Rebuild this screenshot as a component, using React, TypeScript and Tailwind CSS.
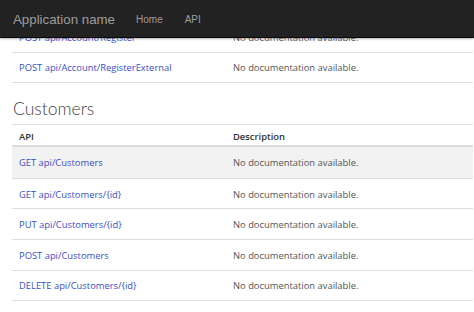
const accountRows = [
  { api: "POST api/Account/Register", desc: "No documentation available." },
  { api: "POST api/Account/RegisterExternal", desc: "No documentation available." },
];

const customerRows = [
  { api: "GET api/Customers", desc: "No documentation available.", active: true },
  { api: "GET api/Customers/{id}", desc: "No documentation available." },
  { api: "PUT api/Customers/{id}", desc: "No documentation available." },
  { api: "POST api/Customers", desc: "No documentation available." },
  { api: "DELETE api/Customers/{id}", desc: "No documentation available." },
];

const Row = ({ api, desc, active, first }: { api: string; desc: string; active?: boolean; first?: boolean }) => (
  <div
    className={`flex h-[30.6px] items-center border-[#dddddd] pt-[2px] ${first ? "" : "border-t"} ${active ? "bg-[#f2f2f2]" : ""}`}
  >
    <a href="#" className="w-[214px] pl-[7px] text-[#3a4fc6]">
      {api}
    </a>
    <span className="pl-[7px] text-[#555]">{desc}</span>
  </div>
);

export default function App() {
  return (
    <div
      className="relative h-[312px] w-[474px] overflow-hidden bg-white text-[9.4px]"
      style={{ fontFamily: '"Open Sans", "Noto Sans", sans-serif' }}
    >
      <nav
        className="absolute inset-x-0 top-0 z-10 flex h-[38px] items-center border-b border-[#080808] bg-[#222222] pl-[13px] shadow-[0_1px_2px_rgba(0,0,0,0.3)]"
        style={{ fontFamily: '"Liberation Sans", Arial, sans-serif' }}
      >
        <span className="pt-[2px] text-[13.3px] text-[#9d9d9d]">Application name</span>
        <span className="ml-[21px] pt-[1px] text-[10px] text-[#9d9d9d]">Home</span>
        <span className="ml-[22px] pt-[1px] text-[10px] text-[#9d9d9d]">API</span>
      </nav>

      <main className="pl-[12px] pr-[1px] pt-[21px]">
        {accountRows.map((r) => (
          <Row key={r.api} {...r} />
        ))}
        <div className="border-t border-[#dddddd]" />

        <h2
          className="pb-[3px] pl-[1px] pt-[14px] text-[17.5px] font-light leading-[24px] text-[#444]"
          style={{ fontFamily: 'Lato, "Open Sans", sans-serif' }}
        >
          Customers
        </h2>

        <div className="flex h-[23px] items-center border-t border-b-2 border-[#dddddd] pt-[3px] font-semibold text-[#333]">
          <span className="w-[214px] pl-[7px]">API</span>
          <span className="pl-[7px]">Description</span>
        </div>
        {customerRows.map((r, i) => (
          <Row key={r.api} {...r} first={i === 0} />
        ))}
        <div className="border-t border-[#dddddd]" />
      </main>
    </div>
  );
}
